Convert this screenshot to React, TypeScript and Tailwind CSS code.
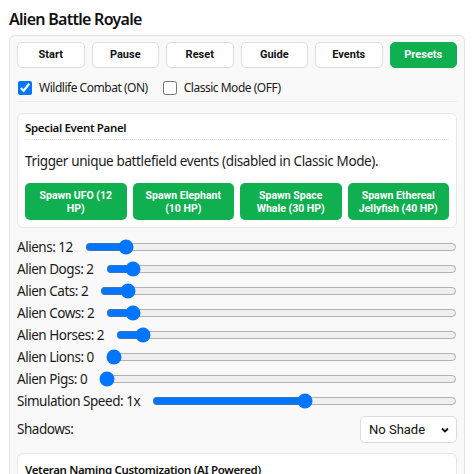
import { useState } from "react";

const body = { fontFamily: '"Noto Sans", "Open Sans", sans-serif' };
const btnFont = { fontFamily: 'Roboto, "Liberation Sans", sans-serif' };

const controls = ["Start", "Pause", "Reset", "Guide", "Events", "Presets"];

const spawns = [
  "Spawn UFO (12 HP)",
  "Spawn Elephant (10 HP)",
  "Spawn Space Whale (30 HP)",
  "Spawn Ethereal Jellyfish (40 HP)",
];

interface SliderRow {
  label: string;
  value: number;
  min: number;
  max: number;
  step?: number;
}

const sliders: SliderRow[] = [
  { label: "Aliens: 12", value: 12, min: 1, max: 120 },
  { label: "Alien Dogs: 2", value: 2, min: 0, max: 35 },
  { label: "Alien Cats: 2", value: 2, min: 0, max: 35 },
  { label: "Alien Cows: 2", value: 2, min: 0, max: 35 },
  { label: "Alien Horses: 2", value: 2, min: 0, max: 35 },
  { label: "Alien Lions: 0", value: 0, min: 0, max: 35 },
  { label: "Alien Pigs: 0", value: 0, min: 0, max: 35 },
  { label: "Simulation Speed: 1x", value: 1, min: 0, max: 2, step: 0.1 },
];

export default function App() {
  const [wildlife, setWildlife] = useState(true);
  const [classic, setClassic] = useState(false);

  return (
    <div className="min-h-screen bg-white px-[9px] pt-[8px] text-[#1a1a1a]" style={body}>
      <h1 className="mb-[5px] text-[16px] font-semibold leading-[22px] tracking-[-0.045em] text-[#111]">
        Alien Battle Royale
      </h1>

      <div className="rounded-[6px] border border-[#e3e3e3] bg-[#f9f9f9] px-[7px] pt-[6px] pb-4">
        <div className="grid grid-cols-6 gap-[7px]">
          {controls.map((c) => (
            <button
              key={c}
              style={btnFont}
              className={
                c === "Presets"
                  ? "h-[26px] rounded-[5px] border border-[#10b050] bg-[#10b050] text-[11px] font-bold text-white"
                  : "h-[26px] rounded-[5px] border border-[#dedede] bg-white text-[11px] font-bold text-[#111]"
              }
            >
              {c}
            </button>
          ))}
        </div>

        <div className="mt-[11px] flex items-center border-b border-[#ececec] pb-[4px] text-[12px] leading-[18px] tracking-[-0.04em]">
          <label className="ml-[1px] flex items-center gap-[7px]">
            <input
              type="checkbox"
              checked={wildlife}
              onChange={() => setWildlife(!wildlife)}
              className="h-[14px] w-[14px]"
            />
            Wildlife Combat (ON)
          </label>
          <label className="ml-[15px] flex items-center gap-[7px]">
            <input
              type="checkbox"
              checked={classic}
              onChange={() => setClassic(!classic)}
              className="h-[14px] w-[14px]"
            />
            Classic Mode (OFF)
          </label>
        </div>

        <div className="mt-[11px] rounded-[6px] border border-[#e6e6e6] bg-white px-[7px] pb-[7px]">
          <div className="border-b border-dotted border-[#dedede] pt-[6px] pb-[3px] text-[11.5px] font-semibold leading-[16px] tracking-[-0.03em] text-[#111]">
            Special Event Panel
          </div>
          <p className="mt-[12px] text-[13.5px] leading-[18px] tracking-[-0.028em]">
            Trigger unique battlefield events (disabled in Classic Mode).
          </p>
          <div className="mt-[13px] grid grid-cols-4 gap-[6px]">
            {spawns.map((s) => (
              <button
                key={s}
                style={btnFont}
                className="h-[37px] rounded-[5px] bg-[#10b050] px-[8px] text-[10.5px] font-bold leading-[13px] text-white"
              >
                {s}
              </button>
            ))}
          </div>
        </div>

        <div className="mt-[8px] flex flex-col">
          {sliders.map((s) => (
            <div
              key={s.label}
              className="flex h-[22px] items-center gap-3 text-[13.5px] tracking-[-0.035em]"
            >
              <span className="whitespace-nowrap">{s.label}</span>
              <input
                type="range"
                min={s.min}
                max={s.max}
                step={s.step ?? 1}
                defaultValue={s.value}
                className="h-4 min-w-0 flex-1"
              />
            </div>
          ))}
        </div>

        <div className="mt-[4px] flex items-center justify-between text-[13.5px] tracking-[-0.035em]">
          <span>Shadows:</span>
          <div
            style={btnFont}
            className="flex h-[27px] w-[97px] items-center justify-between rounded-[5px] border border-[#dcdcdc] bg-white pl-[8px] pr-[6px] text-[13px] tracking-normal text-[#111]"
          >
            No Shade
            <svg width="10" height="10" viewBox="0 0 10 10">
              <path d="M2 3.5 L5 6.5 L8 3.5" fill="none" stroke="#111" strokeWidth="1.8" />
            </svg>
          </div>
        </div>

        <div className="mt-[10px] rounded-[6px] border border-[#e6e6e6] bg-white px-[7px] pt-[8px] pb-3">
          <div className="text-[11.5px] font-semibold leading-[16px] tracking-[-0.03em] text-[#111]">
            Veteran Naming Customization (AI Powered)
          </div>
        </div>
      </div>
    </div>
  );
}
